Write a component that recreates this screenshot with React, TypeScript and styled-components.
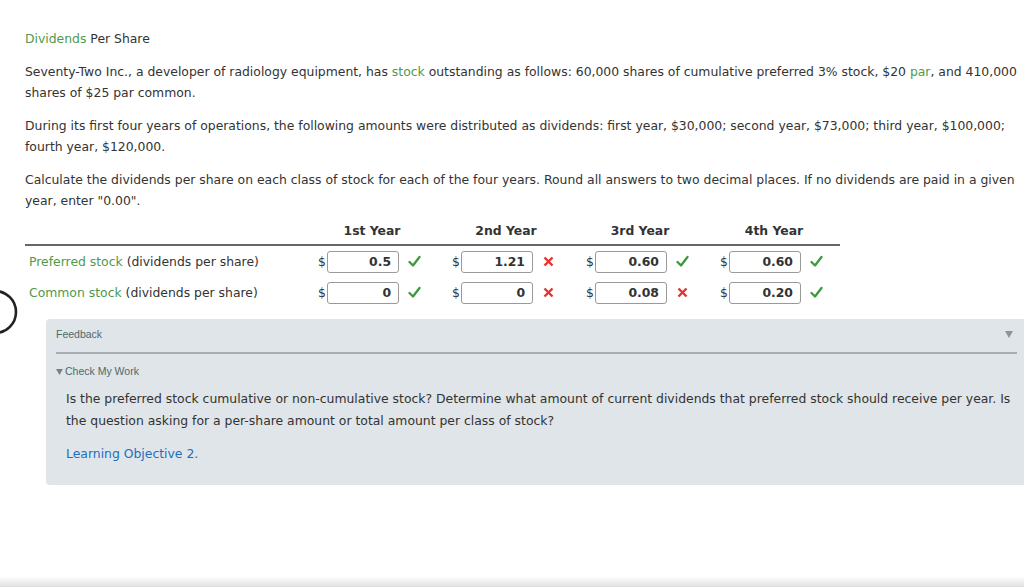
import React from "react";
import styled, { createGlobalStyle } from "styled-components";

const Global = createGlobalStyle`
  html, body { margin: 0; padding: 0; background: #fff; }
  body { font-family: "DejaVu Sans", Verdana, sans-serif; color: #333; overflow: hidden; }
`;

const Page = styled.div`
  position: relative;
  width: 1024px;
  height: 587px;
  overflow: hidden;
  box-sizing: border-box;
  padding: 28px 3px 0 25px;
  font-size: 12.4px;
  line-height: 21px;
`;

const Title = styled.div`
  margin-bottom: 12px;
`;

const Para = styled.p`
  margin: 0 0 12px 0;
  &:last-of-type {
    margin-bottom: 0;
  }
`;

const Term = styled.span`
  color: #4e9a4e;
`;

const Table = styled.div`
  width: 815px;
  margin-top: 9px;
`;

const HeadRow = styled.div`
  display: grid;
  grid-template-columns: 280px repeat(4, 134px);
  border-bottom: 2px solid #666;
  padding-bottom: 3px;
`;

const HeadCell = styled.div`
  text-align: center;
  font-weight: bold;
`;

const Row = styled.div`
  display: grid;
  grid-template-columns: 280px repeat(4, 134px);
  align-items: center;
  height: 31px;
`;

const Label = styled.div`
  padding-left: 4px;
`;

const Cell = styled.div`
  display: flex;
  align-items: center;
  padding-left: 13px;
`;

const Dollar = styled.span`
  width: 9px;
`;

const Box = styled.div`
  width: 72px;
  height: 22px;
  box-sizing: border-box;
  border: 1px solid #9a9a9a;
  border-radius: 3px;
  text-align: right;
  font-weight: bold;
  padding-right: 7px;
  line-height: 20px;
  color: #333;
`;

const Mark = styled.span<{ ok: boolean }>`
  margin-left: ${(p) => (p.ok ? "9px" : "10px")};
  display: inline-flex;
  align-items: center;
`;

const Circle = styled.svg`
  position: absolute;
  left: 0;
  top: 284px;
`;

const Feedback = styled.div`
  margin: 11px -3px 0 21px;
  background: #dfe5e8;
  border-radius: 4px 0 0 4px;
  height: 166px;
  padding: 7px 7px 0 10px;
  box-sizing: border-box;
  font-family: "Liberation Sans", Arial, sans-serif;
`;

const FbHead = styled.div`
  display: flex;
  justify-content: space-between;
  align-items: center;
  font-size: 10.5px;
  color: #4e6a6b;
  height: 16px;
  padding-bottom: 10px;
  border-bottom: 2px solid #a6adb0;
`;

const HeadArrow = styled.span`
  display: inline-flex;
  margin-right: 4px;
`;

const Toggle = styled.div`
  font-size: 10.5px;
  color: #4e6a6b;
  margin-top: 7px;
  display: flex;
  align-items: center;
  gap: 2px;
`;

const FbBody = styled.div`
  font-family: "DejaVu Sans", Verdana, sans-serif;
  font-size: 12.4px;
  line-height: 22px;
  color: #333;
  padding-left: 10px;
  margin-top: 6px;
`;

const LinkText = styled.div`
  color: #1a6fc1;
  margin-top: 11px;
`;

const BottomShade = styled.div`
  position: absolute;
  left: 0;
  right: 0;
  bottom: 0;
  height: 11px;
  background: linear-gradient(to bottom, rgba(0,0,0,0), rgba(0,0,0,0.13));
`;

const Check = () => (
  <svg width="13" height="13" viewBox="0 0 13 13">
    <path d="M1.5 7 L5 10.5 L11.5 2" fill="none" stroke="#3c9a3c" strokeWidth="2.3" strokeLinecap="round" strokeLinejoin="round" />
  </svg>
);

const Cross = () => (
  <svg width="11" height="11" viewBox="0 0 11 11">
    <path d="M1.5 1.5 L9.5 9.5 M9.5 1.5 L1.5 9.5" fill="none" stroke="#e8322b" strokeWidth="2.4" />
  </svg>
);

const Triangle = ({ w, color }: { w: number; color: string }) => (
  <svg width={w} height={w - 1} viewBox="0 0 8 7">
    <path d="M0 0 H8 L4 7 Z" fill={color} />
  </svg>
);

type Ans = { v: string; ok: boolean };
const rows: { name: string; ans: Ans[] }[] = [
  {
    name: "Preferred stock",
    ans: [
      { v: "0.5", ok: true },
      { v: "1.21", ok: false },
      { v: "0.60", ok: true },
      { v: "0.60", ok: true },
    ],
  },
  {
    name: "Common stock",
    ans: [
      { v: "0", ok: true },
      { v: "0", ok: false },
      { v: "0.08", ok: false },
      { v: "0.20", ok: true },
    ],
  },
];

export default function App() {
  return (
    <Page>
      <Global />
      <Title>
        <Term>Dividends</Term> Per Share
      </Title>
      <Para>
        Seventy-Two Inc., a developer of radiology equipment, has <Term>stock</Term> outstanding as follows: 60,000 shares of cumulative preferred 3% stock, $20 <Term>par</Term>, and 410,000 shares of $25 par common.
      </Para>
      <Para>
        During its first four years of operations, the following amounts were distributed as dividends: first year, $30,000; second year, $73,000; third year, $100,000; fourth year, $120,000.
      </Para>
      <Para>
        Calculate the dividends per share on each class of stock for each of the four years. Round all answers to two decimal places. If no dividends are paid in a given year, enter "0.00".
      </Para>
      <Table>
        <HeadRow>
          <div />
          <HeadCell>1st Year</HeadCell>
          <HeadCell>2nd Year</HeadCell>
          <HeadCell>3rd Year</HeadCell>
          <HeadCell>4th Year</HeadCell>
        </HeadRow>
        {rows.map((r) => (
          <Row key={r.name}>
            <Label>
              <Term>{r.name}</Term> (dividends per share)
            </Label>
            {r.ans.map((a, j) => (
              <Cell key={j}>
                <Dollar>$</Dollar>
                <Box>{a.v}</Box>
                <Mark ok={a.ok}>{a.ok ? <Check /> : <Cross />}</Mark>
              </Cell>
            ))}
          </Row>
        ))}
      </Table>
      <Circle width="24" height="60" viewBox="0 0 24 60">
        <circle cx="-5" cy="28" r="21" fill="none" stroke="#222" strokeWidth="2.6" />
      </Circle>
      <Feedback>
        <FbHead>
          <span>Feedback</span>
          <HeadArrow>
            <Triangle w={8} color="#8d9396" />
          </HeadArrow>
        </FbHead>
        <Toggle>
          <Triangle w={7} color="#7a7f82" />
          <span>Check My Work</span>
        </Toggle>
        <FbBody>
          Is the preferred stock cumulative or non-cumulative stock? Determine what amount of current dividends that preferred stock should receive per year. Is the question asking for a per-share amount or total amount per class of stock?
          <LinkText>Learning Objective 2.</LinkText>
        </FbBody>
      </Feedback>
      <BottomShade />
    </Page>
  );
}
